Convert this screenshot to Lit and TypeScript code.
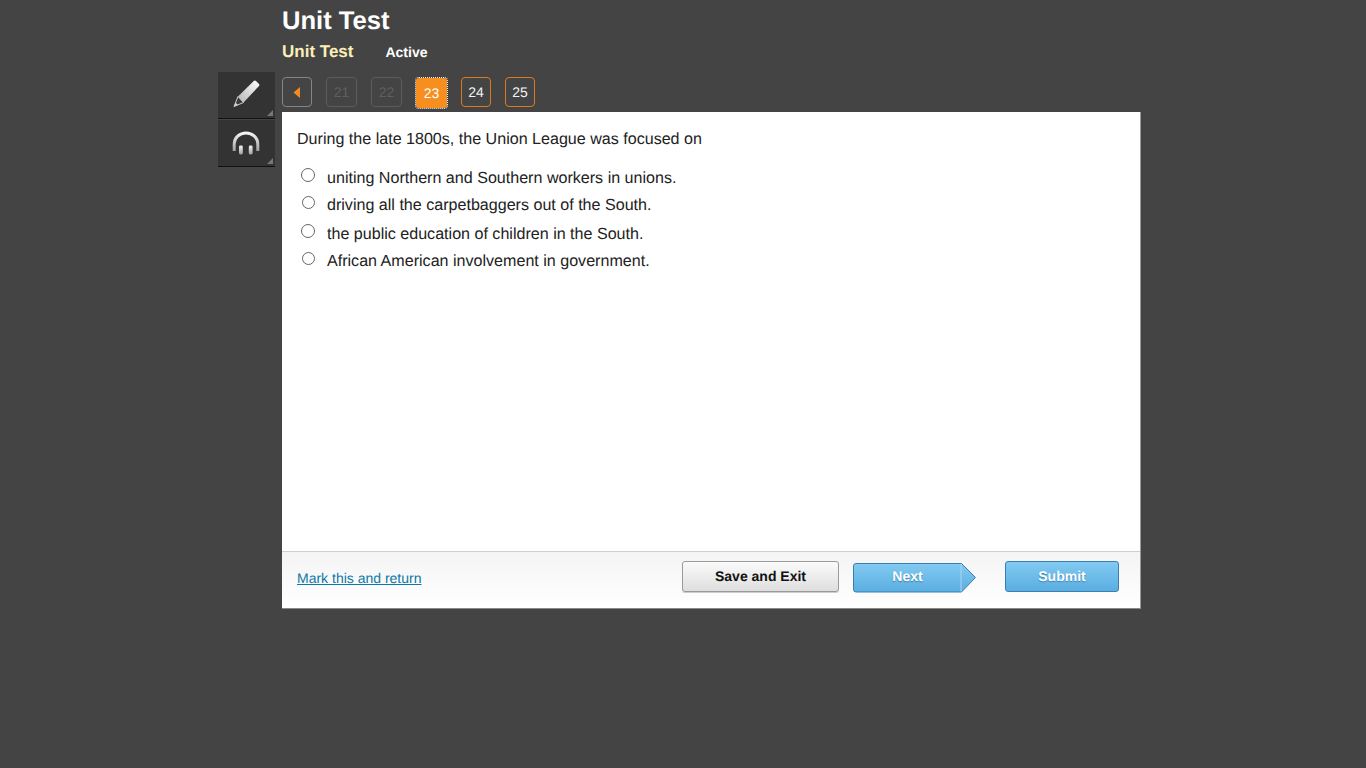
import { LitElement, html, css } from "lit";
import { customElement } from "lit/decorators.js";

const OPTIONS = [
  { text: "uniting Northern and Southern workers in unions.", big: true, h: 27 },
  { text: "driving all the carpetbaggers out of the South.", big: false, h: 29 },
  { text: "the public education of children in the South.", big: true, h: 27 },
  { text: "African American involvement in government.", big: false, h: 27 },
];

@customElement("app-root")
export class AppRoot extends LitElement {
  static styles = css`
    :host { display: block; width: 1366px; height: 768px; background: #444444; overflow: hidden;
      font-family: "Liberation Sans", Arial, sans-serif; color: #222222; text-rendering: geometricPrecision; }
    .page { display: grid; grid-template-columns: 57px 859px; column-gap: 7px; padding-left: 218px; }
    .head { grid-column: 2; height: 72px; }
    .title { font-size: 25.6px; line-height: 30px; font-weight: 700; color: #fff; padding-top: 6px; }
    .sub { display: flex; align-items: baseline; margin-top: 5px; }
    .sub b { font-size: 17px; line-height: 22px; color: #fbeeb8; }
    .sub span { font-size: 14px; font-weight: 700; color: #fff; margin-left: 32px; }
    .tools { display: flex; flex-direction: column; gap: 1px; }
    .tool { position: relative; box-sizing: border-box; width: 57px; height: 47px; background: #333333; border-bottom: 1px solid #111;
      display: flex; align-items: center; justify-content: center; }
    .tool svg { display: block; }
    .corner { position: absolute; right: 2px; bottom: 2px; width: 0; height: 0;
      border-style: solid; border-width: 0 0 6px 6px; border-color: transparent transparent #777 transparent; }
    .nav { display: flex; align-items: flex-start; height: 40px; padding-top: 5px; box-sizing: border-box; }
    .n { box-sizing: border-box; width: 30px; height: 30px; border: 1px solid #d97c20; border-radius: 4px;
      display: flex; align-items: center; justify-content: center; color: #f4f4f4; font-size: 14px; }
    .n.back { border: 1px solid #858585; margin-right: 14px; }
    .n.off { width: 31px; border-color: #5c5c5c; color: #5f5f5f; margin-right: 14px; }
    .n.off.second { margin-right: 13px; }
    .n.cur { width: 33px; height: 32px; padding-bottom: 1px; background: #f78f20; background-clip: padding-box; border: 1px dotted #f4f4f4; color: #fff; margin-right: 13px; }
    .n.plain { margin-right: 14px; }
    .panel { grid-column: 2; width: 859px; height: 497px; background: #fff; box-sizing: border-box;
      display: flex; flex-direction: column; border-bottom: 1px solid #888; border-right: 1px solid #999; }
    .body { flex: 1; padding: 17px 15px 0; font-size: 16.08px; }
    .q { line-height: 20px; }
    .opts { margin-top: 19px; }
    .opt { display: flex; align-items: flex-start; line-height: 20px; }
    .r { flex: none; box-sizing: border-box; border: 1px solid #666; border-radius: 50%; background: #fff; }
    .slot { width: 30px; flex: none; display: flex; justify-content: center; padding-right: 8px; box-sizing: border-box; }
    .r.big { width: 14px; height: 14px; }
    .r.small { width: 13px; height: 13px; margin-top: 1px; }
    .foot { height: 57px; box-sizing: border-box; border-top: 1px solid #cfcfcf;
      background: linear-gradient(#f4f4f4, #ffffff); display: flex; align-items: flex-start; padding-left: 15px; }
    .mark { color: #0b78a8; font-size: 14px; text-decoration: underline; margin-top: 17px; line-height: 18px; width: 385px; }
    .btn { box-sizing: border-box; height: 31px; border-radius: 3px; font-size: 14px; font-weight: 700;
      display: flex; align-items: center; justify-content: center; margin-top: 9px; padding-bottom: 2px; }
    .save { width: 157px; border: 1px solid #9a9a9a; background: linear-gradient(#fbfbfb, #dedede); color: #111; box-shadow: 0 1px 0 #ccc; }
    .next { position: relative; width: 123px; margin-left: 14px; margin-top: 11px; height: 30px; color: #fff; justify-content: flex-start; padding-bottom: 5px; }
    .next svg { position: absolute; left: 0; top: 0; }
    .next span { position: relative; width: 109px; text-align: center; text-shadow: 0 1px 1px #3a7eab; }
    .submit { width: 114px; margin-left: 29px; border: 1px solid #3b7fb2; color: #fff;
      background: linear-gradient(#82caf2, #5aaee0); text-shadow: 0 1px 1px #3a7eab; }
  `;

  render() {
    return html`
      <div class="page">
        <div class="head">
          <div class="title">Unit Test</div>
          <div class="sub"><b>Unit Test</b><span>Active</span></div>
        </div>
        <div class="tools">
          <div class="tool">
            <svg width="30" height="30" viewBox="0 0 30 30">
              <defs><linearGradient id="p" x1="1" y1="0" x2="0" y2="1"><stop offset="0" stop-color="#ffffff"/><stop offset="1" stop-color="#b5b5b5"/></linearGradient></defs>
              <path d="M6 16.5 L22 .8 Q23 0 24 1 L27 4 Q27.8 5 27 6 L11.5 22.5Z" fill="url(#p)"/>
              <path d="M6 16.5 L11.5 22.5 L2 26.5Z" fill="#3c3c3c" stroke="#cfcfcf" stroke-width="1" stroke-linejoin="round"/>
              <path d="M2 26.5 L6 25 L3.6 22.5Z" fill="#cfcfcf"/>
            </svg>
            <span class="corner"></span>
          </div>
          <div class="tool">
            <svg width="30" height="30" viewBox="0 0 30 30">
              <defs><linearGradient id="h" x1="0" y1="0" x2="0" y2="1"><stop offset="0" stop-color="#f4f4f4"/><stop offset="1" stop-color="#a0a0a0"/></linearGradient></defs>
              <path d="M2.2 23 V16 A11.8 11 0 0 1 25.8 16 V23" fill="none" stroke="url(#h)" stroke-width="3"/>
              <rect x="7" y="17.5" width="3.8" height="9" rx="1.4" fill="url(#h)"/>
              <rect x="16.8" y="17.5" width="3.8" height="9" rx="1.4" fill="url(#h)"/>
            </svg>
            <span class="corner"></span>
          </div>
        </div>
        <div>
          <div class="nav">
            <div class="n back">
              <svg width="8" height="11" viewBox="0 0 8 11"><path d="M7 0 V11 L0.5 5.5Z" fill="#ef8a24"/></svg>
            </div>
            <div class="n off">21</div>
            <div class="n off second">22</div>
            <div class="n cur">23</div>
            <div class="n plain">24</div>
            <div class="n">25</div>
          </div>
          <div class="panel">
            <div class="body">
              <div class="q">During the late 1800s, the Union League was focused on</div>
              <div class="opts">
                ${OPTIONS.map(
                  (o) => html`<div class="opt" style="height:${o.h}px">
                    <div class="slot"><div class="r ${o.big ? "big" : "small"}"></div></div>
                    <div>${o.text}</div>
                  </div>`
                )}
              </div>
            </div>
            <div class="foot">
              <a class="mark">Mark this and return</a>
              <div class="btn save">Save and Exit</div>
              <div class="btn next">
                <svg width="123" height="30" viewBox="0 0 123 30">
                  <defs><linearGradient id="g" x1="0" y1="0" x2="0" y2="1"><stop offset="0" stop-color="#82caf2"/><stop offset="1" stop-color="#5aaee0"/></linearGradient></defs>
                  <path d="M3 .5 H108.5 L122.5 14.5 L108.5 29 H3 Q.5 29 .5 26.5 V3 Q.5 .5 3 .5Z" fill="url(#g)" stroke="#3b7fb2"/>
                  <path d="M108 1 V28.5" stroke="#a9d6f2"/>
                </svg>
                <span>Next</span>
              </div>
              <div class="btn submit">Submit</div>
            </div>
          </div>
        </div>
      </div>
    `;
  }
}
